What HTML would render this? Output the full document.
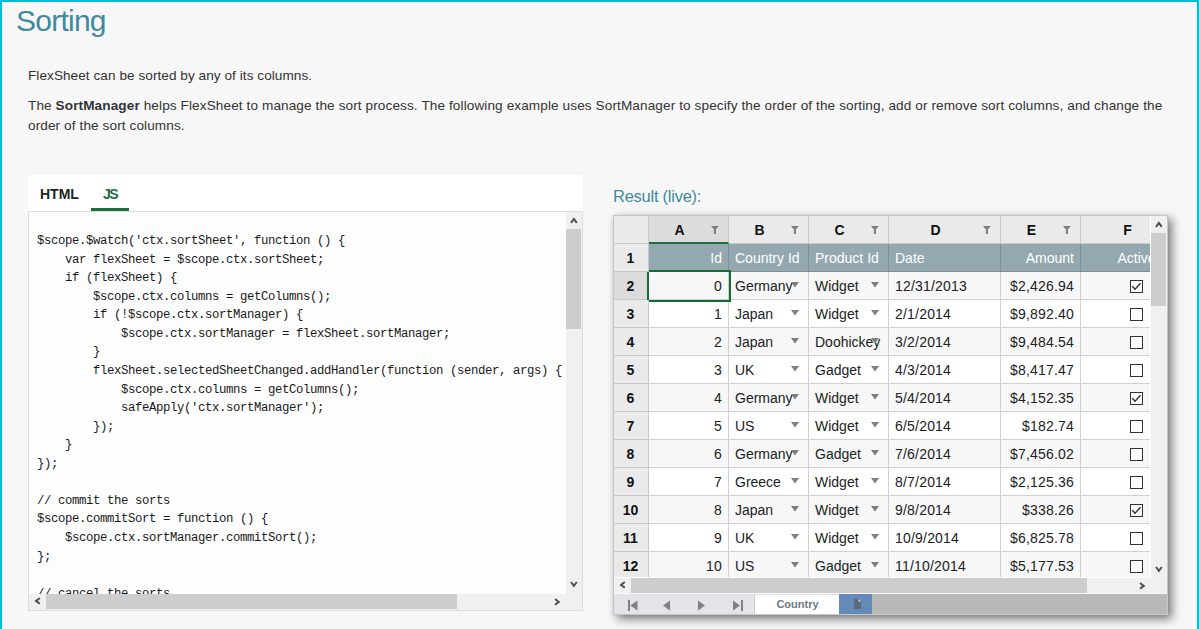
<!DOCTYPE html>
<html><head><meta charset="utf-8">
<style>
*{box-sizing:border-box;margin:0;padding:0}
html,body{width:1199px;height:629px;overflow:hidden}
body{background:#f7f7f7;font-family:"Liberation Sans",sans-serif;position:relative;color:#333}
.frame{position:absolute;left:0;top:0;width:1199px;height:629px;border:2px solid #00bed4;border-bottom:none;pointer-events:none;z-index:50}
.abs{position:absolute;white-space:nowrap}
#title{left:16px;top:3px;font-size:30px;line-height:36px;color:#3f8a9d;letter-spacing:-0.75px}
.p{left:28px;font-size:13.6px;line-height:20px;color:#333;letter-spacing:0.1px}
#res{left:613px;top:185px;font-size:16.5px;line-height:22px;color:#3f8a9d;letter-spacing:-0.25px}

/* code panel */
#cp{left:28px;top:175px;width:555px;height:436px;background:#fff}
#tabs{position:absolute;left:0;top:0;width:555px;height:37px;border-bottom:1px solid #ddd}
.tab{position:absolute;top:9px;font-weight:bold;font-size:14px;line-height:20px}
#code{position:absolute;left:0;top:36px;width:555px;height:400px;border:1px solid #ddd;background:#fdfdfd;overflow:hidden}
pre{position:absolute;left:8px;top:20px;font-family:"Liberation Mono",monospace;font-size:12.3px;letter-spacing:-0.38px;line-height:18.57px;color:#1a1a1a}
.sbv{position:absolute;background:#f0f0f0}
.thumb{position:absolute;background:#cdcdcd}
svg{position:absolute;display:block}

/* grid */
#grid{left:613px;top:215px;width:555px;height:400px;border:1px solid #c6c6c6;background:#fff;box-shadow:4px 4px 9px rgba(0,0,0,.5),0 0 3px rgba(0,0,0,.07);overflow:hidden}
.c{position:absolute;height:28px;line-height:28px;font-size:14px;color:#222;overflow:hidden;white-space:nowrap}

#gc{position:absolute;left:0;top:0;width:537px;height:361px;overflow:hidden;background:#fff}
.gh{position:absolute;height:28px;background:#eaeaea;border-right:1px solid #c8c8c8;border-bottom:1px solid #c8c8c8}
.gh.sel{background:#dcdcdc;border-bottom:2px solid #1e6e3c}
.hl{position:absolute;top:1px;width:63px;left:-1px;text-align:center;font-weight:bold;font-size:14px;line-height:27px;color:#111}
.flt{top:10px}
.rh{position:absolute;left:0;width:35px;height:28px;background:#eaeaea;border-right:1px solid #c8c8c8;border-bottom:1px solid #c8c8c8;text-align:center;font-weight:bold;font-size:14px;line-height:27px;color:#111;padding-top:1px;padding-right:1px}
.rh.sel{background:#dcdcdc}
.hd{position:absolute;height:28px;background:#94a8b0;border-right:1px solid #7d8f97;border-bottom:1px solid #7d8f97;font-size:14px;line-height:27px;color:#fff;white-space:nowrap;overflow:hidden;padding-top:1px}
.d{position:absolute;height:28px;background:#fff;border-right:1px solid #d0d0d0;border-bottom:1px solid #d0d0d0;font-size:14px;line-height:27px;color:#222;white-space:nowrap;overflow:hidden;padding-top:1px}
.d.alt{background:#f7f7f7}
.dd{top:10px}
#tabbar{position:absolute;left:0;top:377px;width:553px;height:21px;background:#e4e4e8;border-top:1px solid #f8f8f8}
#stab{position:absolute;left:140px;top:0;width:86px;height:20px;background:#fff;border-left:1px solid #ccc;border-top:1px solid #e0e0e0;text-align:center;font-weight:bold;font-size:11px;line-height:19px;color:#6f7884}
#addtab{position:absolute;left:225px;top:0;width:33px;height:20px;background:#6589b8}
#gtab{position:absolute;left:258px;top:0;width:295px;height:20px;background:#b9b9b9}
.sg{position:absolute;background:#116d35}
</style></head><body>
<div class="frame"></div>
<div id="title" class="abs">Sorting</div>
<div class="abs p" style="top:66px;letter-spacing:0.05px">FlexSheet can be sorted by any of its columns.</div>
<div class="abs p" style="top:96px">The <b>SortManager</b> helps FlexSheet to manage the sort process. The following example uses SortManager to specify the order of the sorting, add or remove sort columns, and change the</div>
<div class="abs p" style="top:116px">order of the sort columns.</div>

<div id="cp" class="abs">
  <div id="tabs">
    <div class="tab" style="left:12px;color:#222">HTML</div>
    <div class="tab" style="left:75px;color:#1e6e3c;letter-spacing:-1.5px">JS</div>
    <div style="position:absolute;left:63px;top:33px;width:38px;height:3px;background:#1e6e3c"></div>
  </div>
  <div id="code">
<pre>
$scope.$watch('ctx.sortSheet', function () {
    var flexSheet = $scope.ctx.sortSheet;
    if (flexSheet) {
        $scope.ctx.columns = getColumns();
        if (!$scope.ctx.sortManager) {
            $scope.ctx.sortManager = flexSheet.sortManager;
        }
        flexSheet.selectedSheetChanged.addHandler(function (sender, args) {
            $scope.ctx.columns = getColumns();
            safeApply('ctx.sortManager');
        });
    }
});

// commit the sorts
$scope.commitSort = function () {
    $scope.ctx.sortManager.commitSort();
};

// cancel the sorts
$scope.cancelSort = function () {
</pre>
  </div>
</div>

<div style="position:absolute;left:566px;top:212px;width:16px;height:398px;background:#f0f0f0;z-index:10"></div>
<div style="position:absolute;left:566px;top:229px;width:15px;height:100px;background:#cdcdcd;z-index:11"></div>
<div style="position:absolute;left:29px;top:594px;width:537px;height:16px;background:#f0f0f0;z-index:10"></div>
<div style="position:absolute;left:46px;top:594px;width:411px;height:15px;background:#cdcdcd;z-index:11"></div>
<svg style="position:absolute;left:567.60px;top:216.45px;z-index:20" width="11.80" height="9.80"><polyline points="3.00,6.80 5.90,3.00 8.80,6.80" stroke="#505050" stroke-width="2" fill="none"/></svg>
<svg style="position:absolute;left:567.65px;top:579.45px;z-index:20" width="11.80" height="9.80"><polyline points="3.00,3.00 5.90,6.80 8.80,3.00" stroke="#505050" stroke-width="2" fill="none"/></svg>
<svg style="position:absolute;left:32.55px;top:595.45px;z-index:20" width="9.80" height="11.80"><polyline points="6.80,3.00 3.00,5.90 6.80,8.80" stroke="#505050" stroke-width="2" fill="none"/></svg>
<svg style="position:absolute;left:551.75px;top:595.55px;z-index:20" width="9.80" height="11.80"><polyline points="3.00,3.00 6.80,5.90 3.00,8.80" stroke="#505050" stroke-width="2" fill="none"/></svg>
<svg style="position:absolute;left:1152.55px;top:220.45px;z-index:20" width="11.80" height="9.80"><polyline points="3.00,6.80 5.90,3.00 8.80,6.80" stroke="#505050" stroke-width="2" fill="none"/></svg>
<svg style="position:absolute;left:1152.65px;top:563.75px;z-index:20" width="11.80" height="9.80"><polyline points="3.00,3.00 5.90,6.80 8.80,3.00" stroke="#505050" stroke-width="2" fill="none"/></svg>
<svg style="position:absolute;left:617.65px;top:579.40px;z-index:20" width="9.80" height="11.80"><polyline points="6.80,3.00 3.00,5.90 6.80,8.80" stroke="#505050" stroke-width="2" fill="none"/></svg>
<svg style="position:absolute;left:1136.55px;top:579.55px;z-index:20" width="9.80" height="11.80"><polyline points="3.00,3.00 6.80,5.90 3.00,8.80" stroke="#505050" stroke-width="2" fill="none"/></svg>

<div id="res" class="abs">Result (live):</div>
<div id="grid" class="abs"><div id="gc">
<div class="gh" style="left:0;top:0;width:35px"></div>
<div class="gh sel" style="left:35px;top:0;width:80px"><span class="hl" style="width:63px">A</span><svg class="flt" style="left:62px" width="9" height="9" viewBox="0 0 9 9"><path d="M0 0H7.8L4.9 3.5V8H2.9V3.5Z" fill="#7d7d7d"/></svg></div>
<div class="gh" style="left:115px;top:0;width:80px"><span class="hl" style="width:63px">B</span><svg class="flt" style="left:62px" width="9" height="9" viewBox="0 0 9 9"><path d="M0 0H7.8L4.9 3.5V8H2.9V3.5Z" fill="#7d7d7d"/></svg></div>
<div class="gh" style="left:195px;top:0;width:80px"><span class="hl" style="width:63px">C</span><svg class="flt" style="left:62px" width="9" height="9" viewBox="0 0 9 9"><path d="M0 0H7.8L4.9 3.5V8H2.9V3.5Z" fill="#7d7d7d"/></svg></div>
<div class="gh" style="left:275px;top:0;width:112px"><span class="hl" style="width:95px">D</span><svg class="flt" style="left:94px" width="9" height="9" viewBox="0 0 9 9"><path d="M0 0H7.8L4.9 3.5V8H2.9V3.5Z" fill="#7d7d7d"/></svg></div>
<div class="gh" style="left:387px;top:0;width:80px"><span class="hl" style="width:63px">E</span><svg class="flt" style="left:62px" width="9" height="9" viewBox="0 0 9 9"><path d="M0 0H7.8L4.9 3.5V8H2.9V3.5Z" fill="#7d7d7d"/></svg></div>
<div class="gh" style="left:467px;top:0;width:112px"><span class="hl" style="width:95px">F</span></div>
<div class="rh" style="top:28px">1</div>
<div class="rh sel" style="top:56px">2</div>
<div class="rh" style="top:84px">3</div>
<div class="rh" style="top:112px">4</div>
<div class="rh" style="top:140px">5</div>
<div class="rh" style="top:168px">6</div>
<div class="rh" style="top:196px">7</div>
<div class="rh" style="top:224px">8</div>
<div class="rh" style="top:252px">9</div>
<div class="rh" style="top:280px">10</div>
<div class="rh" style="top:308px">11</div>
<div class="rh" style="top:336px">12</div>
<div class="hd" style="left:35px;top:28px;width:80px;text-align:right;padding-right:6px">Id</div>
<div class="hd" style="left:115px;top:28px;width:80px;padding-left:6px">Country Id</div>
<div class="hd" style="left:195px;top:28px;width:80px;padding-left:6px">Product Id</div>
<div class="hd" style="left:275px;top:28px;width:112px;padding-left:6px">Date</div>
<div class="hd" style="left:387px;top:28px;width:80px;text-align:right;padding-right:6px">Amount</div>
<div class="hd" style="left:467px;top:28px;width:112px;text-align:center">Active</div>
<div class="d alt" style="left:35px;top:56px;width:80px;text-align:right;padding-right:6px;letter-spacing:0.2px">0</div>
<div class="d alt" style="left:115px;top:56px;width:80px;padding-left:6px">Germany<svg class="dd" style="left:62px" width="8" height="6" viewBox="0 0 8 6"><path d="M0 0H8L4 5.5Z" fill="#7d7d7d"/></svg></div>
<div class="d alt" style="left:195px;top:56px;width:80px;padding-left:6px">Widget<svg class="dd" style="left:62px" width="8" height="6" viewBox="0 0 8 6"><path d="M0 0H8L4 5.5Z" fill="#7d7d7d"/></svg></div>
<div class="d alt" style="left:275px;top:56px;width:112px;padding-left:6px;letter-spacing:0.2px">12/31/2013</div>
<div class="d alt" style="left:387px;top:56px;width:80px;text-align:right;padding-right:6px;letter-spacing:0.2px">$2,426.94</div>
<div class="d alt" style="left:467px;top:56px;width:112px"><svg style="left:49px;top:8px" width="13" height="13" viewBox="0 0 13 13"><rect x="0.5" y="0.5" width="12" height="12" fill="#fff" stroke="#333"/><path d="M2.3 6.3L5 9.2L10.5 3.3" stroke="#333" stroke-width="1.4" fill="none"/></svg></div>
<div class="d " style="left:35px;top:84px;width:80px;text-align:right;padding-right:6px;letter-spacing:0.2px">1</div>
<div class="d " style="left:115px;top:84px;width:80px;padding-left:6px">Japan<svg class="dd" style="left:62px" width="8" height="6" viewBox="0 0 8 6"><path d="M0 0H8L4 5.5Z" fill="#7d7d7d"/></svg></div>
<div class="d " style="left:195px;top:84px;width:80px;padding-left:6px">Widget<svg class="dd" style="left:62px" width="8" height="6" viewBox="0 0 8 6"><path d="M0 0H8L4 5.5Z" fill="#7d7d7d"/></svg></div>
<div class="d " style="left:275px;top:84px;width:112px;padding-left:6px;letter-spacing:0.2px">2/1/2014</div>
<div class="d " style="left:387px;top:84px;width:80px;text-align:right;padding-right:6px;letter-spacing:0.2px">$9,892.40</div>
<div class="d " style="left:467px;top:84px;width:112px"><svg style="left:49px;top:8px" width="13" height="13" viewBox="0 0 13 13"><rect x="0.5" y="0.5" width="12" height="12" fill="#fff" stroke="#333"/></svg></div>
<div class="d alt" style="left:35px;top:112px;width:80px;text-align:right;padding-right:6px;letter-spacing:0.2px">2</div>
<div class="d alt" style="left:115px;top:112px;width:80px;padding-left:6px">Japan<svg class="dd" style="left:62px" width="8" height="6" viewBox="0 0 8 6"><path d="M0 0H8L4 5.5Z" fill="#7d7d7d"/></svg></div>
<div class="d alt" style="left:195px;top:112px;width:80px;padding-left:6px">Doohickey<svg class="dd" style="left:62px" width="8" height="6" viewBox="0 0 8 6"><path d="M0 0H8L4 5.5Z" fill="#7d7d7d"/></svg></div>
<div class="d alt" style="left:275px;top:112px;width:112px;padding-left:6px;letter-spacing:0.2px">3/2/2014</div>
<div class="d alt" style="left:387px;top:112px;width:80px;text-align:right;padding-right:6px;letter-spacing:0.2px">$9,484.54</div>
<div class="d alt" style="left:467px;top:112px;width:112px"><svg style="left:49px;top:8px" width="13" height="13" viewBox="0 0 13 13"><rect x="0.5" y="0.5" width="12" height="12" fill="#fff" stroke="#333"/></svg></div>
<div class="d " style="left:35px;top:140px;width:80px;text-align:right;padding-right:6px;letter-spacing:0.2px">3</div>
<div class="d " style="left:115px;top:140px;width:80px;padding-left:6px">UK<svg class="dd" style="left:62px" width="8" height="6" viewBox="0 0 8 6"><path d="M0 0H8L4 5.5Z" fill="#7d7d7d"/></svg></div>
<div class="d " style="left:195px;top:140px;width:80px;padding-left:6px">Gadget<svg class="dd" style="left:62px" width="8" height="6" viewBox="0 0 8 6"><path d="M0 0H8L4 5.5Z" fill="#7d7d7d"/></svg></div>
<div class="d " style="left:275px;top:140px;width:112px;padding-left:6px;letter-spacing:0.2px">4/3/2014</div>
<div class="d " style="left:387px;top:140px;width:80px;text-align:right;padding-right:6px;letter-spacing:0.2px">$8,417.47</div>
<div class="d " style="left:467px;top:140px;width:112px"><svg style="left:49px;top:8px" width="13" height="13" viewBox="0 0 13 13"><rect x="0.5" y="0.5" width="12" height="12" fill="#fff" stroke="#333"/></svg></div>
<div class="d alt" style="left:35px;top:168px;width:80px;text-align:right;padding-right:6px;letter-spacing:0.2px">4</div>
<div class="d alt" style="left:115px;top:168px;width:80px;padding-left:6px">Germany<svg class="dd" style="left:62px" width="8" height="6" viewBox="0 0 8 6"><path d="M0 0H8L4 5.5Z" fill="#7d7d7d"/></svg></div>
<div class="d alt" style="left:195px;top:168px;width:80px;padding-left:6px">Widget<svg class="dd" style="left:62px" width="8" height="6" viewBox="0 0 8 6"><path d="M0 0H8L4 5.5Z" fill="#7d7d7d"/></svg></div>
<div class="d alt" style="left:275px;top:168px;width:112px;padding-left:6px;letter-spacing:0.2px">5/4/2014</div>
<div class="d alt" style="left:387px;top:168px;width:80px;text-align:right;padding-right:6px;letter-spacing:0.2px">$4,152.35</div>
<div class="d alt" style="left:467px;top:168px;width:112px"><svg style="left:49px;top:8px" width="13" height="13" viewBox="0 0 13 13"><rect x="0.5" y="0.5" width="12" height="12" fill="#fff" stroke="#333"/><path d="M2.3 6.3L5 9.2L10.5 3.3" stroke="#333" stroke-width="1.4" fill="none"/></svg></div>
<div class="d " style="left:35px;top:196px;width:80px;text-align:right;padding-right:6px;letter-spacing:0.2px">5</div>
<div class="d " style="left:115px;top:196px;width:80px;padding-left:6px">US<svg class="dd" style="left:62px" width="8" height="6" viewBox="0 0 8 6"><path d="M0 0H8L4 5.5Z" fill="#7d7d7d"/></svg></div>
<div class="d " style="left:195px;top:196px;width:80px;padding-left:6px">Widget<svg class="dd" style="left:62px" width="8" height="6" viewBox="0 0 8 6"><path d="M0 0H8L4 5.5Z" fill="#7d7d7d"/></svg></div>
<div class="d " style="left:275px;top:196px;width:112px;padding-left:6px;letter-spacing:0.2px">6/5/2014</div>
<div class="d " style="left:387px;top:196px;width:80px;text-align:right;padding-right:6px;letter-spacing:0.2px">$182.74</div>
<div class="d " style="left:467px;top:196px;width:112px"><svg style="left:49px;top:8px" width="13" height="13" viewBox="0 0 13 13"><rect x="0.5" y="0.5" width="12" height="12" fill="#fff" stroke="#333"/></svg></div>
<div class="d alt" style="left:35px;top:224px;width:80px;text-align:right;padding-right:6px;letter-spacing:0.2px">6</div>
<div class="d alt" style="left:115px;top:224px;width:80px;padding-left:6px">Germany<svg class="dd" style="left:62px" width="8" height="6" viewBox="0 0 8 6"><path d="M0 0H8L4 5.5Z" fill="#7d7d7d"/></svg></div>
<div class="d alt" style="left:195px;top:224px;width:80px;padding-left:6px">Gadget<svg class="dd" style="left:62px" width="8" height="6" viewBox="0 0 8 6"><path d="M0 0H8L4 5.5Z" fill="#7d7d7d"/></svg></div>
<div class="d alt" style="left:275px;top:224px;width:112px;padding-left:6px;letter-spacing:0.2px">7/6/2014</div>
<div class="d alt" style="left:387px;top:224px;width:80px;text-align:right;padding-right:6px;letter-spacing:0.2px">$7,456.02</div>
<div class="d alt" style="left:467px;top:224px;width:112px"><svg style="left:49px;top:8px" width="13" height="13" viewBox="0 0 13 13"><rect x="0.5" y="0.5" width="12" height="12" fill="#fff" stroke="#333"/></svg></div>
<div class="d " style="left:35px;top:252px;width:80px;text-align:right;padding-right:6px;letter-spacing:0.2px">7</div>
<div class="d " style="left:115px;top:252px;width:80px;padding-left:6px">Greece<svg class="dd" style="left:62px" width="8" height="6" viewBox="0 0 8 6"><path d="M0 0H8L4 5.5Z" fill="#7d7d7d"/></svg></div>
<div class="d " style="left:195px;top:252px;width:80px;padding-left:6px">Widget<svg class="dd" style="left:62px" width="8" height="6" viewBox="0 0 8 6"><path d="M0 0H8L4 5.5Z" fill="#7d7d7d"/></svg></div>
<div class="d " style="left:275px;top:252px;width:112px;padding-left:6px;letter-spacing:0.2px">8/7/2014</div>
<div class="d " style="left:387px;top:252px;width:80px;text-align:right;padding-right:6px;letter-spacing:0.2px">$2,125.36</div>
<div class="d " style="left:467px;top:252px;width:112px"><svg style="left:49px;top:8px" width="13" height="13" viewBox="0 0 13 13"><rect x="0.5" y="0.5" width="12" height="12" fill="#fff" stroke="#333"/></svg></div>
<div class="d alt" style="left:35px;top:280px;width:80px;text-align:right;padding-right:6px;letter-spacing:0.2px">8</div>
<div class="d alt" style="left:115px;top:280px;width:80px;padding-left:6px">Japan<svg class="dd" style="left:62px" width="8" height="6" viewBox="0 0 8 6"><path d="M0 0H8L4 5.5Z" fill="#7d7d7d"/></svg></div>
<div class="d alt" style="left:195px;top:280px;width:80px;padding-left:6px">Widget<svg class="dd" style="left:62px" width="8" height="6" viewBox="0 0 8 6"><path d="M0 0H8L4 5.5Z" fill="#7d7d7d"/></svg></div>
<div class="d alt" style="left:275px;top:280px;width:112px;padding-left:6px;letter-spacing:0.2px">9/8/2014</div>
<div class="d alt" style="left:387px;top:280px;width:80px;text-align:right;padding-right:6px;letter-spacing:0.2px">$338.26</div>
<div class="d alt" style="left:467px;top:280px;width:112px"><svg style="left:49px;top:8px" width="13" height="13" viewBox="0 0 13 13"><rect x="0.5" y="0.5" width="12" height="12" fill="#fff" stroke="#333"/><path d="M2.3 6.3L5 9.2L10.5 3.3" stroke="#333" stroke-width="1.4" fill="none"/></svg></div>
<div class="d " style="left:35px;top:308px;width:80px;text-align:right;padding-right:6px;letter-spacing:0.2px">9</div>
<div class="d " style="left:115px;top:308px;width:80px;padding-left:6px">UK<svg class="dd" style="left:62px" width="8" height="6" viewBox="0 0 8 6"><path d="M0 0H8L4 5.5Z" fill="#7d7d7d"/></svg></div>
<div class="d " style="left:195px;top:308px;width:80px;padding-left:6px">Widget<svg class="dd" style="left:62px" width="8" height="6" viewBox="0 0 8 6"><path d="M0 0H8L4 5.5Z" fill="#7d7d7d"/></svg></div>
<div class="d " style="left:275px;top:308px;width:112px;padding-left:6px;letter-spacing:0.2px">10/9/2014</div>
<div class="d " style="left:387px;top:308px;width:80px;text-align:right;padding-right:6px;letter-spacing:0.2px">$6,825.78</div>
<div class="d " style="left:467px;top:308px;width:112px"><svg style="left:49px;top:8px" width="13" height="13" viewBox="0 0 13 13"><rect x="0.5" y="0.5" width="12" height="12" fill="#fff" stroke="#333"/></svg></div>
<div class="d alt" style="left:35px;top:336px;width:80px;text-align:right;padding-right:6px;letter-spacing:0.2px">10</div>
<div class="d alt" style="left:115px;top:336px;width:80px;padding-left:6px">US<svg class="dd" style="left:62px" width="8" height="6" viewBox="0 0 8 6"><path d="M0 0H8L4 5.5Z" fill="#7d7d7d"/></svg></div>
<div class="d alt" style="left:195px;top:336px;width:80px;padding-left:6px">Gadget<svg class="dd" style="left:62px" width="8" height="6" viewBox="0 0 8 6"><path d="M0 0H8L4 5.5Z" fill="#7d7d7d"/></svg></div>
<div class="d alt" style="left:275px;top:336px;width:112px;padding-left:6px;letter-spacing:0.2px">11/10/2014</div>
<div class="d alt" style="left:387px;top:336px;width:80px;text-align:right;padding-right:6px;letter-spacing:0.2px">$5,177.53</div>
<div class="d alt" style="left:467px;top:336px;width:112px"><svg style="left:49px;top:8px" width="13" height="13" viewBox="0 0 13 13"><rect x="0.5" y="0.5" width="12" height="12" fill="#fff" stroke="#333"/></svg></div>
<div class="sg" style="left:35px;top:54px;width:82px;height:2px"></div>
<div class="sg" style="left:115px;top:54px;width:2px;height:32px"></div>
<div class="sg" style="left:35px;top:84px;width:82px;height:2px"></div>
<div class="sg" style="left:33px;top:56px;width:2px;height:28px"></div>
<div style="position:absolute;left:35px;top:56px;width:79px;height:1px;background:#fff"></div>
<div style="position:absolute;left:35px;top:56px;width:1px;height:27px;background:#fff"></div>
</div>
<div class="sbv" style="left:536px;top:0;width:17px;height:377px;border-left:1px solid #fff"></div>
<div class="thumb" style="left:537px;top:17px;width:15px;height:73px"></div>
<div class="sbv" style="left:0;top:361px;width:537px;height:16px;border-top:1px solid #fff"></div>
<div class="thumb" style="left:17px;top:362px;width:456px;height:15px"></div>
<div id="tabbar">
<svg style="left:14px;top:6px" width="10" height="11" viewBox="0 0 10 11"><rect x="0" y="0" width="2" height="11" fill="#808080"/><path d="M2.3 5.5L9.5 0.5V10.5Z" fill="#808080"/></svg>
<svg style="left:49px;top:6px" width="8" height="11" viewBox="0 0 8 11"><path d="M0 5.5L7 0.5V10.5Z" fill="#808080"/></svg>
<svg style="left:84px;top:6px" width="8" height="11" viewBox="0 0 8 11"><path d="M7 5.5L0 0.5V10.5Z" fill="#808080"/></svg>
<svg style="left:119px;top:6px" width="10" height="11" viewBox="0 0 10 11"><path d="M7 5.5L0 0.5V10.5Z" fill="#808080"/><rect x="8" y="0" width="2" height="11" fill="#808080"/></svg>
<div id="stab">Country</div>
<div id="addtab"><svg style="left:15px;top:5px" width="7" height="10" viewBox="0 0 7 10"><path d="M0 0H4.5L7 2.5V10H0Z" fill="#5c6a7a"/><path d="M4.5 0V2.5H7Z" fill="#d8e2ee"/></svg></div>
<div id="gtab"></div>
</div>
</div>
</body></html>
